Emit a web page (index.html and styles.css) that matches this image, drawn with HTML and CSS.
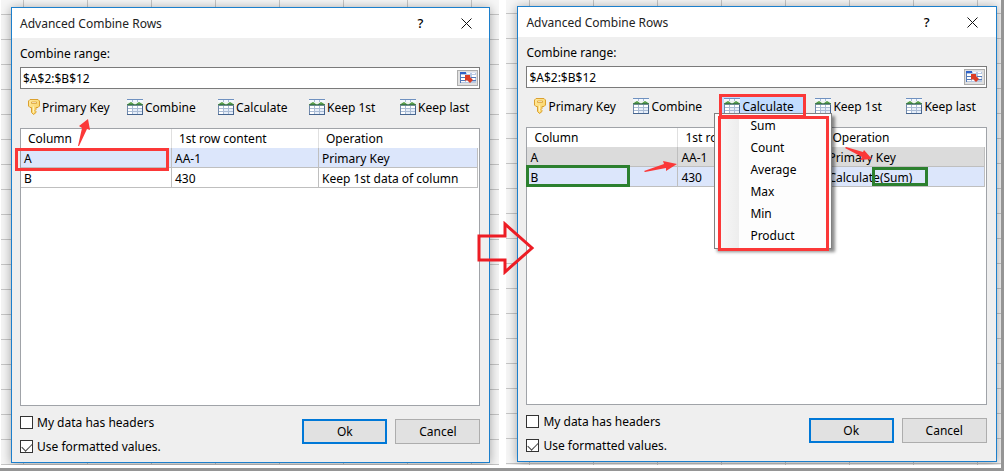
FILE: index.html
```html
<!DOCTYPE html>
<html lang="en">

<head>
  <meta charset="utf-8">
  <title>Advanced Combine Rows</title>
  <meta name="viewport" content="width=device-width, initial-scale=1">
  <link rel="stylesheet" href="styles.css">
</head>

<body>

  <!-- shared icons -->
  <svg class="defs" width="0" height="0" aria-hidden="true">
    <linearGradient id="gold" x1="0" y1="0" x2="1" y2="1">
      <stop offset="0" stop-color="#ffeaa0" />
      <stop offset="1" stop-color="#f8cf5c" />
    </linearGradient>
    <symbol id="key" viewBox="0 0 12 16">
      <path d="M2 .5h8l1.500 1.500v5L10 8.500H8v2l-1 1 1 1v1l-2.500 2-2-2v-5H2L.5 7V2z" fill="url(#gold)" stroke="#dba02f" />
      <path d="M3.500 3h5v1.500h-5z" fill="#fff" stroke="#dba02f" stroke-width=".8" />
      <path d="M5.500 7.500v6" stroke="#fff3c0" />
    </symbol>
    <symbol id="grid" viewBox="0 0 16 16">
      <path d="M0 0h16v16H0z" fill="#a9bbd4" />
      <path d="M0 0h16v1H0z" fill="#6f91c0" />
      <path d="M0 1h5v2H0zM6 1h4v2H6zM11 1h5v2h-5z" fill="#f4f9ff" />
      <path d="M0 3h16v3H0z" fill="#eef4ee" />
      <path d="M0 6V5.500L4 3l3.500 2.500h1L12 3l4 2.500V6z" fill="#4a9440" />
      <path d="M3 4.500L4 3.500l1 1zM11 4.500l1-1 1 1z" fill="#7cc064" />
      <path d="M0 5.500h16v1H0z" fill="#2f5f4a" />
      <path d="M1 7h4v2H1zM6 7h4v2H6zM11 7h4v2h-4zM1 10h4v2H1zM1 13h4v2H1z" fill="#fff" />
      <path d="M6 10h4v2H6zM11 10h4v2h-4zM6 13h4v2H6zM11 13h4v2h-4z" fill="#e6eef9" />
      <path d="M0 7h1v9H0z" fill="#7089ac" />
      <path d="M15 7h1v9H0v-1h15z" fill="#46658f" />
    </symbol>
    <symbol id="pick" viewBox="0 0 16 12">
      <path d="M0 0h16v11H0z" fill="#b7c8e3" />
      <path d="M0 0h6v2H0z" fill="#2f62c8" />
      <path d="M6 0h10v1H6z" fill="#dfe6f2" />
      <path d="M7 1h3v1H7zM12 1h3v1h-3zM1 3h4v2H1zM1 6h4v2H1zM1 9h4v1H1zM6 9h4v1H6zM12 3h4v2h-4zM12 6h3v2h-3z" fill="#fff" />
      <path d="M0 2h1v9H0zM1 5h4v1H1zM1 8h4v1H1zM11 5h5v1h-5zM12 8h4v1h-4z" fill="#5279b8" />
      <path d="M5 3h5v2l3 3-3 3-3-3-2 1z" fill="#dc3d25" />
    </symbol>
  </svg>

  <main class="stage">

    <section class="sheet sheet-left">
      <form class="dialog">
        <header class="titlebar">
          <h1>Advanced Combine Rows</h1>
          <button type="button" class="help">?</button>
          <button type="button" class="close" aria-label="Close">
            <svg width="11" height="11" viewBox="0 0 11 11"><path d="M.5 .5l10 10M10.500 .5l-10 10" /></svg>
          </button>
        </header>

        <div class="content">
          <label for="range1" class="range-label">Combine range:</label>
          <div class="range">
            <input type="text" id="range1" value="$A$2:$B$12">
            <button type="button" class="picker" aria-label="Select range"><svg width="16" height="12"><use href="#pick" /></svg></button>
          </div>

          <div class="toolbar">
            <button type="button" class="primary-key"><svg width="12" height="16"><use href="#key" /></svg>Primary Key</button>
            <button type="button"><svg width="16" height="16"><use href="#grid" /></svg>Combine</button>
            <button type="button"><svg width="16" height="16"><use href="#grid" /></svg>Calculate</button>
            <button type="button"><svg width="16" height="16"><use href="#grid" /></svg>Keep 1st</button>
            <button type="button"><svg width="16" height="16"><use href="#grid" /></svg>Keep last</button>
          </div>

          <div class="list">
            <table>
              <thead>
                <tr><th class="col-name">Column</th><th class="col-content">1st row content</th><th>Operation</th></tr>
              </thead>
              <tbody>
                <tr class="selected"><td>A</td><td>AA-1</td><td>Primary Key</td></tr>
                <tr><td>B</td><td>430</td><td>Keep 1st data of column</td></tr>
              </tbody>
            </table>
          </div>

          <footer class="footer">
            <div class="options">
              <label><input type="checkbox">My data has headers</label>
              <label><input type="checkbox" checked>Use formatted values.</label>
            </div>
            <button type="button" class="button ok">Ok</button>
            <button type="button" class="button">Cancel</button>
          </footer>
        </div>

        <div class="mark mark-row-a"></div>
        <svg class="arrow arrow-key" width="14" height="28" viewBox="0 0 14 28"><path d="M1 27l4-18-3-2L11 0l2 11-3-1L2 27z" /></svg>
      </form>
    </section>

    <section class="sheet sheet-right">
      <form class="dialog">
        <header class="titlebar">
          <h1>Advanced Combine Rows</h1>
          <button type="button" class="help">?</button>
          <button type="button" class="close" aria-label="Close">
            <svg width="11" height="11" viewBox="0 0 11 11"><path d="M.5 .5l10 10M10.500 .5l-10 10" /></svg>
          </button>
        </header>

        <div class="content">
          <label for="range2" class="range-label">Combine range:</label>
          <div class="range">
            <input type="text" id="range2" value="$A$2:$B$12">
            <button type="button" class="picker" aria-label="Select range"><svg width="16" height="12"><use href="#pick" /></svg></button>
          </div>

          <div class="toolbar">
            <button type="button" class="primary-key"><svg width="12" height="16"><use href="#key" /></svg>Primary Key</button>
            <button type="button"><svg width="16" height="16"><use href="#grid" /></svg>Combine</button>
            <button type="button" class="active"><svg width="16" height="16"><use href="#grid" /></svg>Calculate</button>
            <button type="button"><svg width="16" height="16"><use href="#grid" /></svg>Keep 1st</button>
            <button type="button"><svg width="16" height="16"><use href="#grid" /></svg>Keep last</button>
          </div>

          <div class="list">
            <table>
              <thead>
                <tr><th class="col-name">Column</th><th class="col-content">1st row content</th><th>Operation</th></tr>
              </thead>
              <tbody>
                <tr class="inactive"><td>A</td><td>AA-1</td><td>Primary Key</td></tr>
                <tr class="selected"><td>B</td><td>430</td><td>Calculate(Sum)</td></tr>
              </tbody>
            </table>
          </div>

          <footer class="footer">
            <div class="options">
              <label><input type="checkbox">My data has headers</label>
              <label><input type="checkbox" checked>Use formatted values.</label>
            </div>
            <button type="button" class="button ok">Ok</button>
            <button type="button" class="button">Cancel</button>
          </footer>
        </div>

        <div class="menu">
          <button type="button">Sum</button>
          <button type="button">Count</button>
          <button type="button">Average</button>
          <button type="button">Max</button>
          <button type="button">Min</button>
          <button type="button">Product</button>
        </div>

        <div class="mark mark-calculate"></div>
        <div class="mark mark-menu"></div>
        <div class="mark green mark-row-b"></div>
        <div class="mark green mark-sum"></div>
        <svg class="arrow arrow-row" width="34" height="13" viewBox="0 0 34 13"><path d="M0 11l20-7-1-3 14 3-11 7v-3L1 12z" /></svg>
        <svg class="arrow arrow-sum" width="28" height="14" viewBox="0 0 28 14"><path d="M1 0l17 5 1-2 8 9-12 1 2-3L0 1z" /></svg>
      </form>
    </section>

    <svg class="step-arrow" width="58" height="54" viewBox="0 0 58 54"><path d="M2 15h26V3l27 24-27 24V39H2z" /></svg>
  </main>

</body>

</html>
```
FILE: styles.css
```css
* {
  box-sizing: border-box;
}

body {
  margin: 0;
  min-height: 100vh;
  display: flex;
  background: #fff;
  color: #000;
  font-family: "Noto Sans", Tahoma, sans-serif;
  font-size: 12px;
  border-right: 3px solid #959595;
  border-bottom: 3px solid #959595;
}

button,
input {
  margin: 0;
  font: inherit;
  color: inherit;
}

button {
  padding: 0;
  border: 0;
  background: none;
}

.defs {
  position: absolute;
}

/* spreadsheet behind the dialogs */
.stage {
  position: relative;
  flex: 1;
  display: flex;
  gap: 7px;
  padding: 0 1px 3px 1px;
}

.sheet {
  flex: 1 1 0;
  min-width: 0;
  overflow: hidden;
  background-color: #f6f6f6;
  background-image:
    linear-gradient(90deg, #c6c6c6 1px, transparent 1px),
    linear-gradient(#c6c6c6 1px, transparent 1px);
  background-size: 64px 25px;
}

.sheet-left {
  padding: 7px 9px 2px 10px;
  background-position: 22px 14px;
}

.sheet-right {
  padding: 6px 4px 3px 11px;
  background-position: 23px 13px;
}

/* dialog */
.dialog {
  position: relative;
  background: #efefef;
  border: 1px solid #1c7fcc;
  box-shadow: 0 1px 10px rgba(0, 0, 0, 0.35);
}

.titlebar {
  display: flex;
  align-items: center;
  height: 30px;
  padding-left: 8px;
  background: #fff;
}

h1 {
  flex: 1;
  margin: 0;
  font-size: 12px;
  font-weight: normal;
  color: #222;
}

.titlebar button {
  width: 46px;
  height: 30px;
}

.help {
  font-size: 13px;
  font-weight: 500;
}

.close svg {
  display: block;
  margin: 0 auto;
  fill: none;
  stroke: #111;
}

.content {
  padding: 7px 9px 6px 8px;
}

.range-label {
  display: block;
  line-height: 18px;
  margin-bottom: 4px;
}

.range {
  display: flex;
  align-items: center;
  height: 22px;
  padding: 0 1px 0 2px;
  background: #fff;
  border: 1px solid #7a7a7a;
}

.range input {
  flex: 1;
  min-width: 0;
  padding: 0;
  border: 0;
  outline: 0;
  background: none;
}

.picker {
  display: flex;
  align-items: center;
  justify-content: center;
  width: 21px;
  height: 16px;
  border: 1px solid #adadad;
  background: #e1e1e1;
}

.toolbar {
  display: grid;
  grid-template-columns: 104px repeat(3, 91px) auto;
  justify-items: start;
  margin: 8px 0 11px;
}

.toolbar button {
  display: flex;
  align-items: center;
  gap: 2px;
  height: 20px;
  padding: 0 11px 0 3px;
  white-space: nowrap;
}

.toolbar .primary-key {
  padding: 0 0 0 8px;
}

.toolbar .active {
  background: #c2dcff;
}

.list {
  height: 278px;
  padding-right: 1px;
  background: #fff;
  border: 1px solid #a0a3a8;
}

table {
  width: 100%;
  table-layout: fixed;
  border-collapse: separate;
  border-spacing: 0;
}

th,
td {
  padding: 2px 0 0 3px;
  border-right: 1px solid #bfbfbf;
  border-bottom: 1px solid #bfbfbf;
  line-height: 17px;
  text-align: left;
  font-weight: normal;
  white-space: nowrap;
}

th {
  padding: 0 0 0 7px;
  line-height: 19px;
  border-bottom: 0;
  border-color: #e0e0e0;
}

th:last-child {
  border-right: 0;
}

.col-name {
  width: 151px;
}

.col-content {
  width: 147px;
}

.selected {
  background: #dce6fb;
}

.inactive {
  background: #dbdbdb;
}

.footer {
  display: flex;
  gap: 8px;
  padding-top: 6px;
}

.options {
  flex: 1;
  display: flex;
  flex-direction: column;
  gap: 4px;
}

.options label {
  display: flex;
  align-items: center;
  gap: 4px;
  height: 20px;
}

.options input {
  appearance: none;
  width: 13px;
  height: 13px;
  border: 1px solid #333;
  background: #fff;
}

.options input:checked::after {
  content: "";
  display: block;
  width: 9px;
  height: 5px;
  margin: 2px 0 0 1px;
  border: solid #444;
  border-width: 0 0 1px 1px;
  transform: rotate(-45deg);
}

.button {
  width: 85px;
  height: 25px;
  margin-top: 7px;
  border: 1px solid #adadad;
  background: #e1e1e1;
}

.ok {
  border: 2px solid #0078d7;
}

/* calculate drop-down */
.menu {
  position: absolute;
  left: 196px;
  top: 106px;
  width: 118px;
  padding: 0 2px 2px;
  border: 1px solid #808080;
  background: linear-gradient(90deg, #fdfdfd 2px, #f8f8f8 4px, #ededed 24px, #fdfdfd 24px);
  box-shadow: 3px 3px 3px rgba(0, 0, 0, 0.45);
}

.menu button {
  display: block;
  width: 100%;
  height: 22px;
  padding-left: 33px;
  text-align: left;
}

/* highlights drawn over the dialogs */
.mark {
  position: absolute;
  border: 3px solid #fb3838;
  pointer-events: none;
}

.green {
  border-color: #2c802f;
}

.mark-row-a {
  left: 3px;
  top: 140px;
  width: 154px;
  height: 23px;
}

.mark-calculate {
  left: 201px;
  top: 87px;
  width: 87px;
  height: 24px;
}

.mark-menu {
  left: 200px;
  top: 109px;
  width: 111px;
  height: 135px;
}

.mark-row-b {
  left: 8px;
  top: 158px;
  width: 104px;
  height: 22px;
}

.mark-sum {
  left: 354px;
  top: 160px;
  width: 56px;
  height: 19px;
}

.arrow {
  position: absolute;
  fill: #fb3838;
}

.arrow-key {
  left: 65px;
  top: 111px;
}

.arrow-row {
  left: 126px;
  top: 153px;
}

.arrow-sum {
  left: 327px;
  top: 140px;
}

.step-arrow {
  position: absolute;
  left: 50%;
  top: 221px;
  margin-left: -24px;
  fill: none;
  stroke: #ed1c24;
  stroke-width: 3;
}
```
